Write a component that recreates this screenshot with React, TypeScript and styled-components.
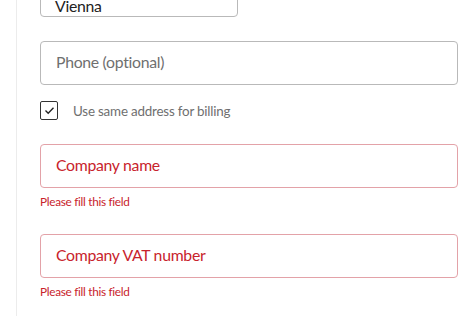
import React from "react";
import styled, { createGlobalStyle } from "styled-components";

const Global = createGlobalStyle`
  html, body { margin: 0; padding: 0; background: #ffffff; }
  body { font-family: "Lato", "Noto Sans", sans-serif; overflow: hidden; }
`;

const Page = styled.div`
  width: 474px;
  height: 316px;
  overflow: hidden;
  display: flex;
  background: #ffffff;
`;

const Panel = styled.div`
  margin-left: 16px;
  width: 449px;
  height: 316px;
  border-left: 1px solid #ececec;
  padding: 0 0 0 23px;
  box-sizing: border-box;
`;

const Form = styled.div`
  display: flex;
  flex-direction: column;
  margin-top: -27px;
`;

const Field = styled.div<{ $w?: number; $error?: boolean; $filled?: boolean }>`
  width: ${(p) => (p.$w ? `${p.$w}px` : "418px")};
  height: 44px;
  box-sizing: border-box;
  border: 1px solid ${(p) => (p.$error ? "#e3a2a8" : "#b9b9b9")};
  border-radius: 4px;
  background: #fff;
  display: flex;
  align-items: ${(p) => (p.$filled ? "flex-end" : "center")};
  padding: ${(p) => (p.$filled ? "0 0 1px 14px" : "0 0 3px 15px")};
  font-size: 15.8px;
  letter-spacing: -0.3px;
  color: ${(p) => (p.$error ? "#c8232c" : p.$filled ? "#222" : "#6f6f6f")};
`;

const Gap = styled.div<{ $h: number }>`
  height: ${(p) => p.$h}px;
  flex: none;
`;

const CheckRow = styled.label`
  display: flex;
  align-items: center;
  gap: 15px;
  height: 19px;
  font-size: 13.4px;
  letter-spacing: -0.2px;
  color: #6f6f6f;
`;

const Box = styled.span`
  width: 18px;
  height: 19px;
  box-sizing: border-box;
  border: 1.5px solid #333;
  border-radius: 2px;
  display: flex;
  align-items: center;
  justify-content: center;
`;

const ErrorText = styled.div`
  margin-top: 6px;
  height: 16px;
  line-height: 16px;
  font-size: 11.8px;
  letter-spacing: -0.3px;
  color: #c8232c;
`;

export default function App() {
  return (
    <Page>
      <Global />
      <Panel>
        <Form>
          <Field $w={198} $filled>Vienna</Field>
          <Gap $h={24} />
          <Field>Phone (optional)</Field>
          <Gap $h={16} />
          <CheckRow>
            <Box>
              <svg width="11" height="9" viewBox="0 0 11 9">
                <path d="M1.5 4.6 L4.2 7.2 L9.5 1.8" fill="none" stroke="#222" strokeWidth="1.4" />
              </svg>
            </Box>
            Use same address for billing
          </CheckRow>
          <Gap $h={24} />
          <Field $error>Company name</Field>
          <ErrorText>Please fill this field</ErrorText>
          <Gap $h={24} />
          <Field $error>Company VAT number</Field>
          <ErrorText>Please fill this field</ErrorText>
        </Form>
      </Panel>
    </Page>
  );
}
